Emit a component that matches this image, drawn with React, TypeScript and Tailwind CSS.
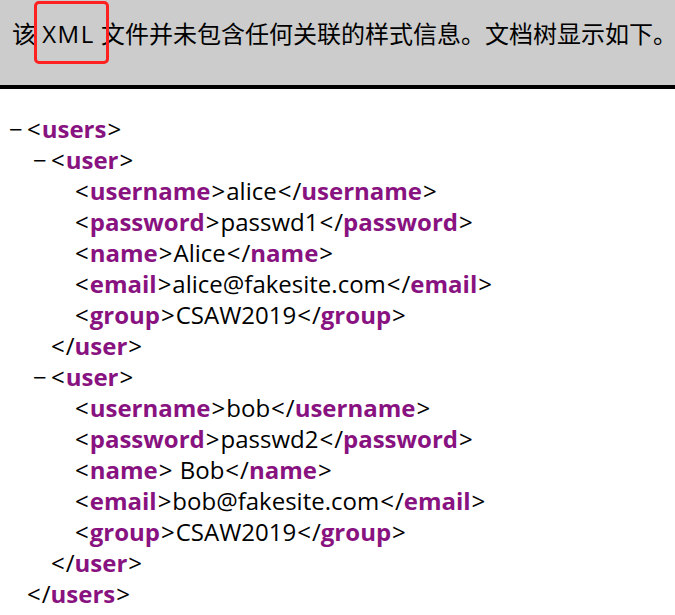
import React from 'react';

type Node = {
  tag: string;
  text?: string;
  children?: Node[];
};

const users: Node = {
  tag: 'users',
  children: [
    {
      tag: 'user',
      children: [
        { tag: 'username', text: 'alice' },
        { tag: 'password', text: 'passwd1' },
        { tag: 'name', text: 'Alice' },
        { tag: 'email', text: 'alice@fakesite.com' },
        { tag: 'group', text: 'CSAW2019' },
      ],
    },
    {
      tag: 'user',
      children: [
        { tag: 'username', text: 'bob' },
        { tag: 'password', text: 'passwd2' },
        { tag: 'name', text: ' Bob' },
        { tag: 'email', text: 'bob@fakesite.com' },
        { tag: 'group', text: 'CSAW2019' },
      ],
    },
  ],
};

const indent = ['pl-[26px]', 'pl-[50px]', 'pl-[74px]'];

function Tag({ name, close }: { name: string; close?: boolean }) {
  return (
    <span>
      <span className="px-[1px]">&lt;</span>
      {close ? '/' : ''}
      <span className="font-bold text-[#881280]">{name}</span>
      <span className="px-[1px]">&gt;</span>
    </span>
  );
}

function Line({ depth, children, fold }: { depth: number; children: React.ReactNode; fold?: boolean }) {
  return (
    <div className={`h-[31px] whitespace-pre ${indent[depth]}`}>
      {fold && <span className="inline-block w-[17px] -ml-[17px] text-left">−</span>}
      {children}
    </div>
  );
}

function Tree({ node, depth }: { node: Node; depth: number }) {
  if (!node.children) {
    return (
      <Line depth={depth}>
        <Tag name={node.tag} />
        {node.text}
        <Tag name={node.tag} close />
      </Line>
    );
  }
  return (
    <>
      <Line depth={depth} fold>
        <Tag name={node.tag} />
      </Line>
      {node.children.map((c, i) => (
        <Tree key={i} node={c} depth={depth + 1} />
      ))}
      <Line depth={depth}>
        <Tag name={node.tag} close />
      </Line>
    </>
  );
}

export default function App() {
  return (
    <div
      className="min-h-screen bg-white text-black text-[24px]"
      style={{ fontFamily: '"Open Sans", "Noto Sans CJK SC", sans-serif' }}
    >
      <div className="relative h-[89px] bg-[#cccccc] border-b-4 border-black pl-3 pt-[18px] leading-[31px] whitespace-nowrap">
        <span>该 </span>
        <span className="relative tracking-[1.5px]">
          XML
          <span className="absolute -left-[8px] -right-[14px] -top-[16px] -bottom-[14px] rounded-[5px] border-[3px] border-[#ff2020]" />
        </span>
        <span> 文件并未包含任何关联的样式信息。文档树显示如下。</span>
      </div>
      <div className="pt-[24px] leading-[31px]">
        <Tree node={users} depth={0} />
      </div>
    </div>
  );
}
